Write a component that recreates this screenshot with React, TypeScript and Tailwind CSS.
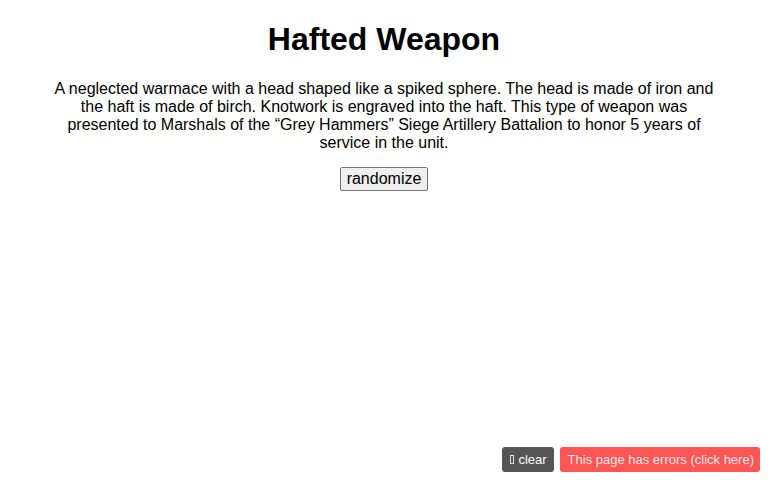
import React, { useState } from "react";

const WEAPONS = [
  "A neglected warmace with a head shaped like a spiked sphere. The head is made of iron and the haft is made of birch. Knotwork is engraved into the haft. This type of weapon was presented to Marshals of the \u201cGrey Hammers\u201d Siege Artillery Battalion to honor 5 years of service in the unit.",
];

const App: React.FC = () => {
  const [idx, setIdx] = useState<number>(0);

  return (
    <div className="relative h-[480px] w-[768px] bg-white text-black font-['Liberation_Sans',Arial,sans-serif]">
      <div className="flex flex-col items-center pt-[21px]">
        <h1 className="text-[32px] font-bold leading-[37px]">Hafted Weapon</h1>
        <p className="mt-[22px] w-[672px] text-center text-[16px] leading-[18px]">
          {WEAPONS[idx]}
        </p>
        <button
          type="button"
          onClick={() => setIdx((idx + 1) % WEAPONS.length)}
          className="mt-[15px] h-[24px] rounded-[2px] border border-[#767676] bg-[#efefef] px-[6px] text-[16px] leading-[18px] text-black"
        >
          randomize
        </button>
      </div>

      {/* error console toggles */}
      <div className="absolute bottom-[8px] right-[8px] flex gap-[6px] text-[13px] leading-[15px]">
        <button
          type="button"
          className="flex h-[25px] items-center gap-[4px] rounded-[3px] bg-[#555555] pl-[8px] pr-[7px] text-white"
        >
          <span className="inline-block h-[9px] w-[4px] border border-white/80" />
          clear
        </button>
        <button
          type="button"
          className="h-[25px] rounded-[3px] bg-[#ff5555] pl-[8px] pr-[6px] text-[#fde8e8]"
        >
          This page has errors (click here)
        </button>
      </div>
    </div>
  );
};

export default App;
